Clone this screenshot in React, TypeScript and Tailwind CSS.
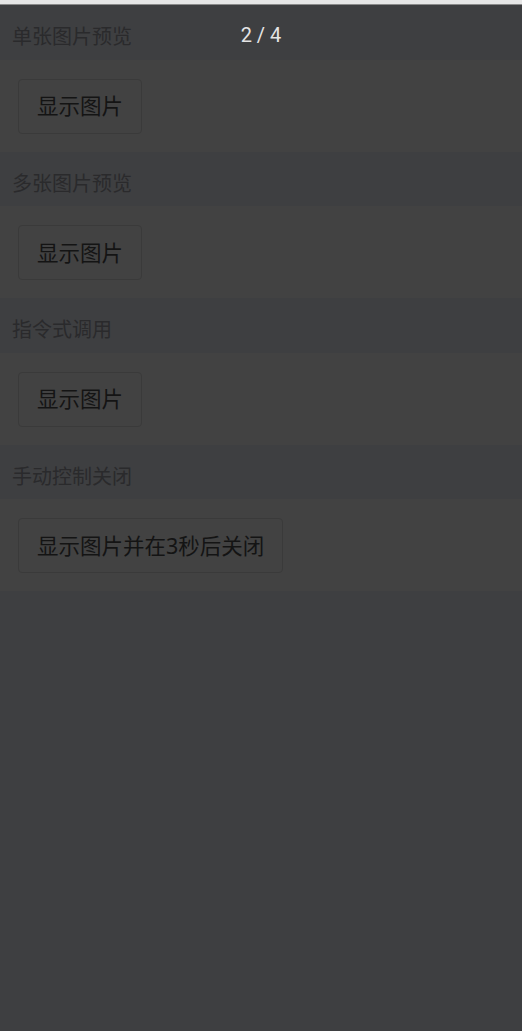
import React from "react";

const sections = [
    { title: "单张图片预览", button: "显示图片" },
    { title: "多张图片预览", button: "显示图片" },
    { title: "指令式调用", button: "显示图片" },
    { title: "手动控制关闭", button: "显示图片并在3秒后关闭" },
];

const font = { fontFamily: '"Noto Sans", "Noto Sans CJK SC", sans-serif' };

const DemoBlock = ({ title, button }: { title: string; button: string }) => {
    return (
        <div>
            <div className="h-[54.5px] pl-[12px] pt-[21px] text-[20px] leading-[22px] text-[#2a2a2c]">
                {title}
            </div>
            <div className="h-[92px] bg-[#424242] pl-[18px] pt-[19px]">
                <button
                    type="button"
                    className="h-[55px] rounded-[4px] border border-[#3a3a3a] bg-[#424242] px-[18px] text-[21.5px] leading-none text-[#141414]"
                >
                    {button}
                </button>
            </div>
        </div>
    );
}

export default function App() {
    return (
        <div className="relative h-[1031px] w-full overflow-hidden bg-[#3e3f41]" style={font}>
            <div className="h-[5px] border-b border-[#8a8a8a] bg-[#e6e6e6]" />
            {sections.map((s) => (
                <DemoBlock key={s.title} title={s.title} button={s.button} />
            ))}
            <div
                className="absolute left-0 right-0 top-[23px] text-center text-[20px] leading-[24px] text-[#e4e4e4]"
                style={{ fontFamily: 'Roboto, "Liberation Sans", sans-serif' }}
            >
                2 / 4
            </div>
        </div>
    );
}
